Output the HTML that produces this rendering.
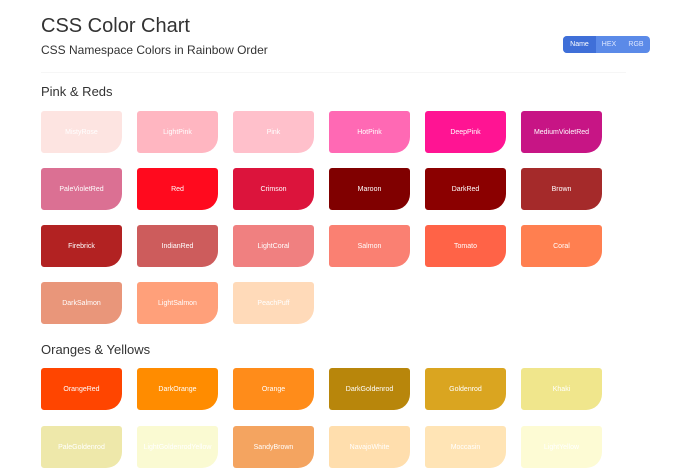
<!DOCTYPE html>
<html><head><style>
body{margin:0;width:680px;height:455px;overflow:hidden;background:#fff;font-family:"Liberation Sans",sans-serif;color:#2a2a2a;position:relative}
.a{position:absolute}
h1{position:absolute;left:41px;top:15px;margin:0;font-size:20px;font-weight:normal;color:#333}
.sub{left:41px;top:43px;font-size:12px;color:#333}
.line{left:41px;top:72px;width:585px;height:1px;background:#f6f6f6}
.sec{left:41px;font-size:13px;color:#333}
.t{position:absolute;width:81px;height:42px;border-radius:3px 3px 16px 3px;color:#fff;font-size:7px;display:flex;align-items:center;justify-content:center}
.tg{position:absolute;left:563px;top:36px;width:87px;height:17px;border-radius:4px;background:#5b8ae8;display:flex;font-size:7px;color:#dfe8ff;overflow:hidden}
.tg div{display:flex;align-items:center;justify-content:center}
</style></head><body>
<h1>CSS Color Chart</h1>
<div class="a sub">CSS Namespace Colors in Rainbow Order</div>
<div class="tg"><div style="width:33px;background:#3f6fd8;color:#fff">Name</div><div style="width:26px">HEX</div><div style="width:28px">RGB</div></div>
<div class="a line"></div>
<div class="a sec" style="top:84px">Pink &amp; Reds</div>
<div class="a sec" style="top:342px">Oranges &amp; Yellows</div>
<div id="g"></div>
<script>
const rows=[
[111,[["MistyRose","#fde4e1"],["LightPink","#ffb6c1"],["Pink","#ffc0cb"],["HotPink","#ff69b4"],["DeepPink","#ff1493"],["MediumVioletRed","#c71585"]]],
[168,[["PaleVioletRed","#db7093"],["Red","#ff0a1e"],["Crimson","#dc143c"],["Maroon","#800000"],["DarkRed","#8b0000"],["Brown","#a52a2a"]]],
[225,[["Firebrick","#b22222"],["IndianRed","#cd5c5c"],["LightCoral","#f08080"],["Salmon","#fa8072"],["Tomato","#ff6347"],["Coral","#ff7f50"]]],
[282,[["DarkSalmon","#e9967a"],["LightSalmon","#ffa07a"],["PeachPuff","#ffdab9"]]],
[368,[["OrangeRed","#ff4500"],["DarkOrange","#ff8c00"],["Orange","#ff8c1a"],["DarkGoldenrod","#b8860b"],["Goldenrod","#daa520"],["Khaki","#f0e68c"]]],
[426,[["PaleGoldenrod","#eee8aa"],["LightGoldenrodYellow","#fafad2"],["SandyBrown","#f4a460"],["NavajoWhite","#ffdead"],["Moccasin","#ffe4b5"],["LightYellow","#fdfbd4"]]]];
let h="";for(const [y,c] of rows)c.forEach((x,i)=>{h+=`<div class="t" style="left:${41+i*96}px;top:${y}px;background:${x[1]}">${x[0]}</div>`});
document.getElementById("g").innerHTML=h;
</script>
</body></html>
